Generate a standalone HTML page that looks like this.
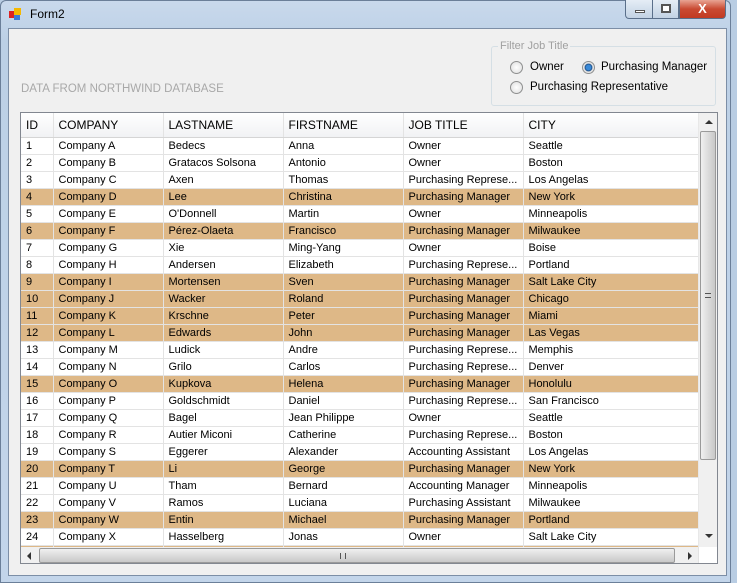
<!DOCTYPE html>
<html><head><meta charset="utf-8"><style>
*{margin:0;padding:0;box-sizing:border-box}
body{width:737px;height:583px;overflow:hidden;background:#b9cde3;font-family:"Liberation Sans",sans-serif;font-size:11px;color:#000;position:relative}
.frame{position:absolute;left:0;top:0;width:731px;height:583px;background:linear-gradient(#c9d9ec,#bcd0e6 40px,#c3d5ea);border:1px solid #6b7f99;border-radius:6px 6px 0 0}
.title{position:absolute;left:30px;top:7px;font-size:12px;color:#000}
.icon{position:absolute;left:9px;top:7px;width:14px;height:14px}
.btn{position:absolute;top:0;height:19px;border:1px solid #5a6f8a;border-top:none}
.client{position:absolute;left:8px;top:28px;width:719px;height:548px;background:#f0f0f0;border:1px solid #7c8ea6}
.lbl{position:absolute;left:12px;top:54px;color:#a8a8a8;font-size:11.5px}
.gb{position:absolute;left:482px;top:17px;width:225px;height:60px;border:1px solid #d5dfe5;border-radius:3px}
.gbt{position:absolute;left:489px;top:11px;background:#f0f0f0;color:#a0a0a0;padding:0 2px;font-size:11px}
.rb{position:absolute;width:13px;height:13px;border-radius:50%;border:1px solid #8e8f8f;background:radial-gradient(#fff,#dcdcdc)}
.rt{position:absolute;font-size:11.5px}
.grid{position:absolute;left:11px;top:83px;width:698px;height:452px;border:1px solid #828790;background:#fff;overflow:hidden}
table{border-collapse:collapse;position:absolute;left:0;top:0;table-layout:fixed}
td,th{height:17px;padding:1px 0 0 5px;border-right:1px solid #e3e3e3;border-bottom:1px solid #e3e3e3;white-space:nowrap;overflow:hidden;text-align:left;font-weight:normal}
th{height:24px;padding-top:0;background:linear-gradient(#fff,#f1f2f4);border-bottom:1px solid #d5d5d5;font-size:12px}
tr.h td{background:#deb887}
.vs{position:absolute;left:677px;top:0;width:19px;height:434px;background:#f0f0f0;border-left:1px solid #e8e8e8}
.hs{position:absolute;left:0;top:434px;width:677px;height:17px;background:#f0f0f0}
</style></head><body>
<div class="frame"></div>
<svg class="icon" viewBox="0 0 14 14"><rect x="0" y="4" width="5" height="7" fill="#d22"/><rect x="5" y="1" width="7" height="7" fill="#f5b800"/><rect x="5" y="8" width="6" height="5" fill="#3b7bd6"/></svg>
<div class="title">Form2</div>
<div class="btn" style="left:625px;width:28px;background:linear-gradient(#e5edf6,#c2d2e4);border-radius:0 0 0 4px"><div style="position:absolute;left:9px;top:10px;width:10px;height:3px;background:#fff;border:1px solid #555"></div></div>
<div class="btn" style="left:652px;width:27px;background:linear-gradient(#e5edf6,#c2d2e4)"><div style="position:absolute;left:8px;top:4px;width:10px;height:9px;border:2px solid #555;background:#fff"></div></div>
<div class="btn" style="left:679px;width:47px;background:linear-gradient(#e8a493,#c94a32 50%,#c23a22);border-radius:0 0 4px 0;color:#fff;font-weight:bold;font-size:13px;text-align:center;line-height:17px">X</div>
<div class="client">
<div class="lbl">DATA FROM NORTHWIND DATABASE</div>
<div class="gb"></div><div class="gbt">Filter Job Title</div>
<div class="rb" style="left:501px;top:32px"></div><div class="rt" style="left:521px;top:32px">Owner</div>
<div class="rb" style="left:573px;top:32px;background:radial-gradient(#3a8ad8 30%,#1d4f8a 45%,#e0e0e0 55%,#fff)"></div><div class="rt" style="left:592px;top:32px">Purchasing Manager</div>
<div class="rb" style="left:501px;top:52px"></div><div class="rt" style="left:521px;top:52px">Purchasing Representative</div>
<div class="grid">
<table>
<colgroup><col style="width:32px"><col style="width:110px"><col style="width:120px"><col style="width:120px"><col style="width:120px"><col style="width:175px"></colgroup>
<tr><th>ID</th><th>COMPANY</th><th>LASTNAME</th><th>FIRSTNAME</th><th>JOB TITLE</th><th>CITY</th></tr>
<tr><td>1</td><td>Company A</td><td>Bedecs</td><td>Anna</td><td>Owner</td><td>Seattle</td></tr>
<tr><td>2</td><td>Company B</td><td>Gratacos Solsona</td><td>Antonio</td><td>Owner</td><td>Boston</td></tr>
<tr><td>3</td><td>Company C</td><td>Axen</td><td>Thomas</td><td>Purchasing Represe...</td><td>Los Angelas</td></tr>
<tr class="h"><td>4</td><td>Company D</td><td>Lee</td><td>Christina</td><td>Purchasing Manager</td><td>New York</td></tr>
<tr><td>5</td><td>Company E</td><td>O'Donnell</td><td>Martin</td><td>Owner</td><td>Minneapolis</td></tr>
<tr class="h"><td>6</td><td>Company F</td><td>Pérez-Olaeta</td><td>Francisco</td><td>Purchasing Manager</td><td>Milwaukee</td></tr>
<tr><td>7</td><td>Company G</td><td>Xie</td><td>Ming-Yang</td><td>Owner</td><td>Boise</td></tr>
<tr><td>8</td><td>Company H</td><td>Andersen</td><td>Elizabeth</td><td>Purchasing Represe...</td><td>Portland</td></tr>
<tr class="h"><td>9</td><td>Company I</td><td>Mortensen</td><td>Sven</td><td>Purchasing Manager</td><td>Salt Lake City</td></tr>
<tr class="h"><td>10</td><td>Company J</td><td>Wacker</td><td>Roland</td><td>Purchasing Manager</td><td>Chicago</td></tr>
<tr class="h"><td>11</td><td>Company K</td><td>Krschne</td><td>Peter</td><td>Purchasing Manager</td><td>Miami</td></tr>
<tr class="h"><td>12</td><td>Company L</td><td>Edwards</td><td>John</td><td>Purchasing Manager</td><td>Las Vegas</td></tr>
<tr><td>13</td><td>Company M</td><td>Ludick</td><td>Andre</td><td>Purchasing Represe...</td><td>Memphis</td></tr>
<tr><td>14</td><td>Company N</td><td>Grilo</td><td>Carlos</td><td>Purchasing Represe...</td><td>Denver</td></tr>
<tr class="h"><td>15</td><td>Company O</td><td>Kupkova</td><td>Helena</td><td>Purchasing Manager</td><td>Honolulu</td></tr>
<tr><td>16</td><td>Company P</td><td>Goldschmidt</td><td>Daniel</td><td>Purchasing Represe...</td><td>San Francisco</td></tr>
<tr><td>17</td><td>Company Q</td><td>Bagel</td><td>Jean Philippe</td><td>Owner</td><td>Seattle</td></tr>
<tr><td>18</td><td>Company R</td><td>Autier Miconi</td><td>Catherine</td><td>Purchasing Represe...</td><td>Boston</td></tr>
<tr><td>19</td><td>Company S</td><td>Eggerer</td><td>Alexander</td><td>Accounting Assistant</td><td>Los Angelas</td></tr>
<tr class="h"><td>20</td><td>Company T</td><td>Li</td><td>George</td><td>Purchasing Manager</td><td>New York</td></tr>
<tr><td>21</td><td>Company U</td><td>Tham</td><td>Bernard</td><td>Accounting Manager</td><td>Minneapolis</td></tr>
<tr><td>22</td><td>Company V</td><td>Ramos</td><td>Luciana</td><td>Purchasing Assistant</td><td>Milwaukee</td></tr>
<tr class="h"><td>23</td><td>Company W</td><td>Entin</td><td>Michael</td><td>Purchasing Manager</td><td>Portland</td></tr>
<tr><td>24</td><td>Company X</td><td>Hasselberg</td><td>Jonas</td><td>Owner</td><td>Salt Lake City</td></tr>
<tr class="h"><td>25</td><td>Company Y</td><td>x</td><td>x</td><td>x</td><td>x</td></tr>
</table>
<div class="vs">
<div style="position:absolute;left:6px;top:7px;width:0;height:0;border:4px solid transparent;border-bottom:4px solid #333;border-top:none"></div>
<div style="position:absolute;left:1px;top:18px;width:16px;height:329px;border:1px solid #9a9a9a;border-radius:2px;background:linear-gradient(90deg,#f0f0f0,#dcdcdc 50%,#c8c8c8)"></div>
<div style="position:absolute;left:6px;top:180px;width:6px;height:5px;border-top:1px solid #555;border-bottom:1px solid #555"></div>
<div style="position:absolute;left:6px;top:421px;width:0;height:0;border:4px solid transparent;border-top:4px solid #333;border-bottom:none"></div>
</div>
<div class="hs">
<div style="position:absolute;left:6px;top:5px;border:4px solid transparent;border-right:4px solid #333;border-left:none"></div>
<div style="position:absolute;left:18px;top:1px;width:636px;height:15px;border:1px solid #9a9a9a;border-radius:2px;background:linear-gradient(#f0f0f0,#dcdcdc 50%,#c8c8c8)"></div>
<div style="position:absolute;left:319px;top:6px;width:6px;height:6px;border-left:1px solid #555;border-right:1px solid #555"></div>
<div style="position:absolute;left:667px;top:5px;border:4px solid transparent;border-left:4px solid #333;border-right:none"></div>
</div>
</div>
</div>
</body></html>
